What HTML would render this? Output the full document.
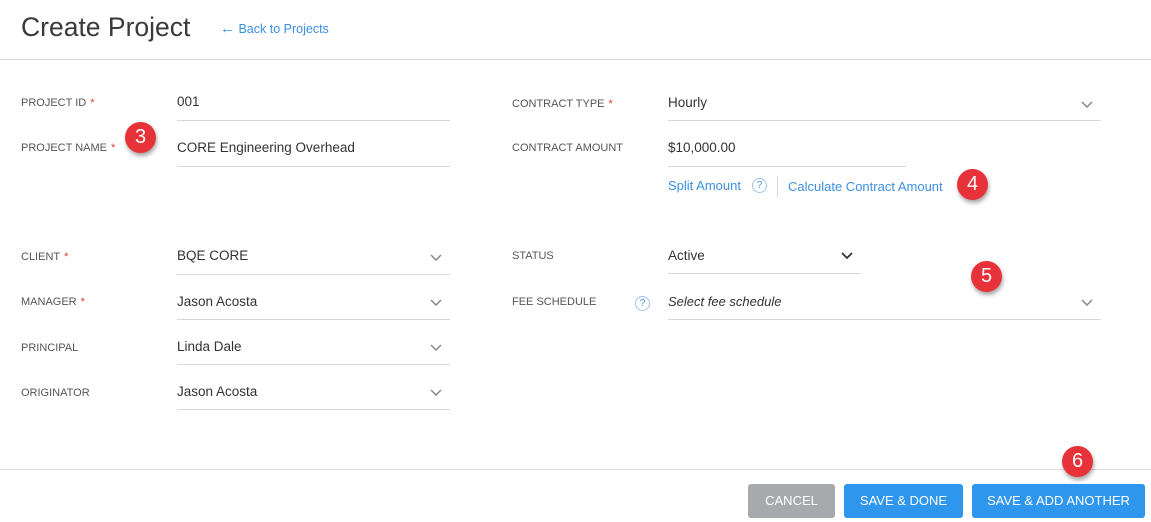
<!DOCTYPE html><html><head><style>
body{margin:0;width:1151px;height:522px;background:#fff;font-family:"Liberation Sans",sans-serif;position:relative;overflow:hidden;color:#333}
.a{position:absolute}
.lab{position:absolute;font-size:11px;color:#555;text-transform:uppercase}
.lab i{color:#e53935;font-style:normal;margin-left:4px}
.val{position:absolute;font-size:13.5px;color:#333}
.ul{position:absolute;height:1px;background:#d5d8dd}
.chev{position:absolute;width:10px;height:6px}
.chev svg{display:block}
.badge{position:absolute;width:31px;height:31px;border-radius:50%;background:#e8323a;color:#fff;font-size:20px;text-align:center;line-height:31px;box-shadow:1px 3px 4px rgba(0,0,0,.35)}
.btn{position:absolute;top:484px;height:34px;border-radius:3px;color:#fff;font-size:13px;text-align:center;line-height:34px;background:#2f96ee}
.q{position:absolute;width:13px;height:13px;border:1px solid #9cc3ea;border-radius:50%;color:#4a90e2;font-size:10px;text-align:center;line-height:13px}
</style></head><body>
<div class="a" style="left:21px;top:12px;font-size:26.5px;color:#3a3a3a">Create Project</div>
<div class="a" style="left:220px;top:22px;font-size:12.5px;color:#3d8fe0"><span style="font-size:15px;line-height:12px">←</span> Back to Projects</div>
<div class="ul" style="left:0;top:59px;width:1151px"></div>

<div class="lab" style="left:21px;top:97px">Project ID<i>*</i></div>
<div class="val" style="left:177px;top:94px">001</div><div class="ul" style="left:177px;top:120px;width:273px"></div>
<div class="lab" style="left:21px;top:142px">Project Name<i>*</i></div>
<div class="val" style="left:177px;top:140px">CORE Engineering Overhead</div><div class="ul" style="left:177px;top:166px;width:273px"></div>

<div class="lab" style="left:512px;top:98px">Contract Type<i>*</i></div>
<div class="val" style="left:668px;top:95px">Hourly</div><div class="chev" style="left:1081px;top:101px"><svg width="12" height="7"><path d="M1 1L6 6L11 1" fill="none" stroke="#888" stroke-width="1.5"/></svg></div><div class="ul" style="left:668px;top:120px;width:433px"></div>
<div class="lab" style="left:512px;top:142px">Contract Amount</div>
<div class="val" style="left:668px;top:140px">$10,000.00</div><div class="ul" style="left:668px;top:166px;width:238px"></div>
<div class="a" style="left:668px;top:178px;font-size:13px;color:#3d8fe0">Split Amount</div>
<div class="q" style="left:752px;top:178px">?</div>
<div class="a" style="left:777px;top:176px;width:1px;height:22px;background:#ddd"></div>
<div class="a" style="left:788px;top:179px;font-size:13px;color:#3d8fe0">Calculate Contract Amount</div>

<div class="lab" style="left:21px;top:251px">Client<i>*</i></div>
<div class="val" style="left:177px;top:248px">BQE CORE</div><div class="chev" style="left:430px;top:254px"><svg width="12" height="7"><path d="M1 1L6 6L11 1" fill="none" stroke="#888" stroke-width="1.5"/></svg></div><div class="ul" style="left:177px;top:274px;width:273px"></div>
<div class="lab" style="left:21px;top:296px">Manager<i>*</i></div>
<div class="val" style="left:177px;top:294px">Jason Acosta</div><div class="chev" style="left:430px;top:299px"><svg width="12" height="7"><path d="M1 1L6 6L11 1" fill="none" stroke="#888" stroke-width="1.5"/></svg></div><div class="ul" style="left:177px;top:319px;width:273px"></div>
<div class="lab" style="left:21px;top:342px">Principal</div>
<div class="val" style="left:177px;top:339px">Linda Dale</div><div class="chev" style="left:430px;top:344px"><svg width="12" height="7"><path d="M1 1L6 6L11 1" fill="none" stroke="#888" stroke-width="1.5"/></svg></div><div class="ul" style="left:177px;top:364px;width:273px"></div>
<div class="lab" style="left:21px;top:387px">Originator</div>
<div class="val" style="left:177px;top:384px">Jason Acosta</div><div class="chev" style="left:430px;top:389px"><svg width="12" height="7"><path d="M1 1L6 6L11 1" fill="none" stroke="#888" stroke-width="1.5"/></svg></div><div class="ul" style="left:177px;top:409px;width:273px"></div>

<div class="lab" style="left:512px;top:250px">Status</div>
<div class="val" style="left:668px;top:248px">Active</div><div class="chev" style="left:841px;top:252px"><svg width="12" height="7"><path d="M1 1L6 6L11 1" fill="none" stroke="#333" stroke-width="1.8"/></svg></div><div class="ul" style="left:668px;top:273px;width:193px"></div>
<div class="lab" style="left:512px;top:296px">Fee Schedule</div>
<div class="q" style="left:635px;top:296px">?</div>
<div class="val" style="left:668px;top:294px;font-style:italic;font-size:13px">Select fee schedule</div><div class="chev" style="left:1081px;top:299px"><svg width="12" height="7"><path d="M1 1L6 6L11 1" fill="none" stroke="#888" stroke-width="1.5"/></svg></div><div class="ul" style="left:668px;top:319px;width:433px"></div>

<div class="ul" style="left:0;top:469px;width:1151px;background:#ddd"></div>
<div class="btn" style="left:748px;width:87px;background:#a7a9ac">CANCEL</div>
<div class="btn" style="left:844px;width:119px">SAVE &amp; DONE</div>
<div class="btn" style="left:972px;width:173px">SAVE &amp; ADD ANOTHER</div>

<div class="badge" style="left:125px;top:122px">3</div>
<div class="badge" style="left:957px;top:169px">4</div>
<div class="badge" style="left:971px;top:261px">5</div>
<div class="badge" style="left:1062px;top:446px">6</div>
</body></html>
